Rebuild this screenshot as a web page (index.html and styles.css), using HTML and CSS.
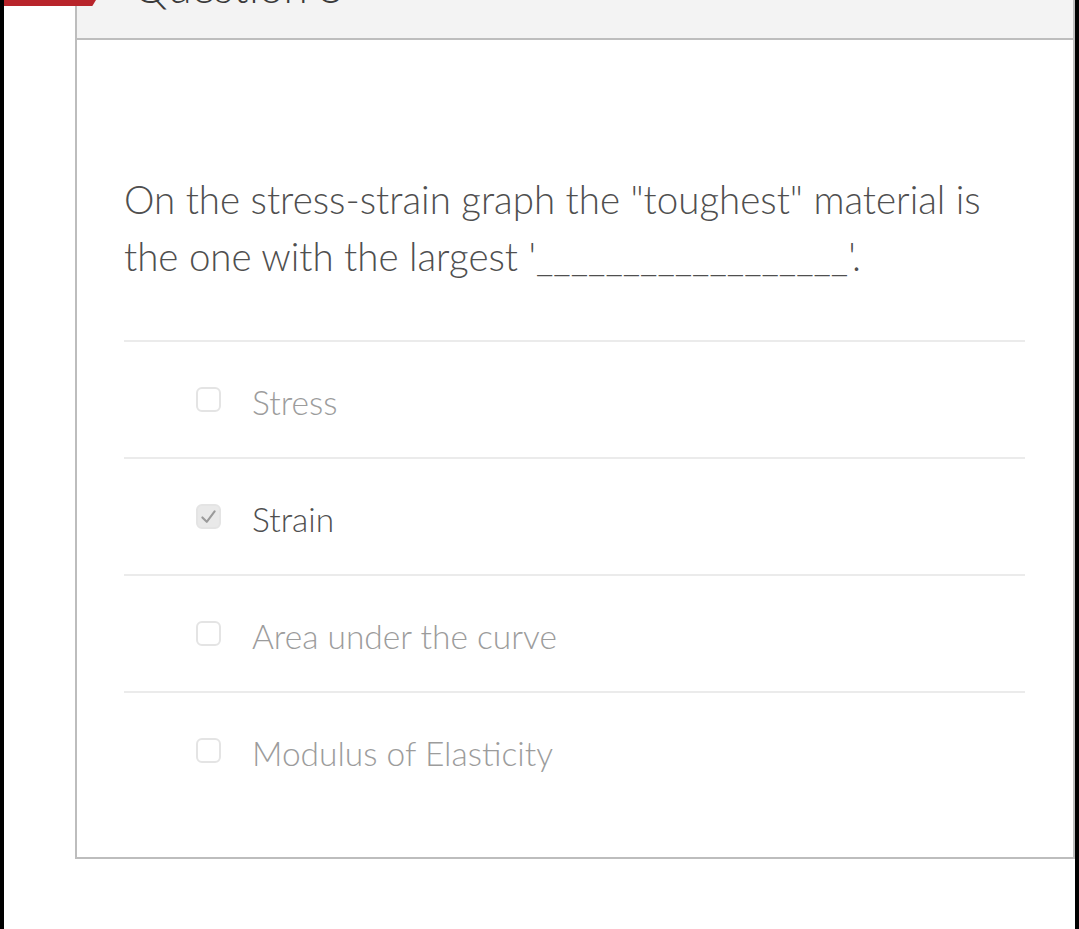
FILE: index.html
```html
<!DOCTYPE html>
<html lang="en">
<head>
<meta charset="utf-8">
<title>Question 5</title>
<link rel="stylesheet" href="styles.css">
</head>
<body>
<div class="screen">
  <div class="flag"></div>
  <div class="card">
    <div class="card-header">
      <h2 class="title">Question 5</h2>
    </div>
    <div class="card-body">
      <p class="question">On the stress-strain graph the "toughest" material is the one with the largest '__________________'.</p>
      <ul class="options">
        <li class="option">
          <span class="box"></span>
          <span class="label">Stress</span>
        </li>
        <li class="option is-checked">
          <span class="box">
            <svg viewBox="0 0 24 24" width="24" height="24" aria-hidden="true"><path d="M5 12.5 L10 17.5 L19 5.5" fill="none" stroke="#9a9a9a" stroke-width="2.4" stroke-linecap="round" stroke-linejoin="round"/></svg>
          </span>
          <span class="label">Strain</span>
        </li>
        <li class="option">
          <span class="box"></span>
          <span class="label">Area under the curve</span>
        </li>
        <li class="option">
          <span class="box"></span>
          <span class="label">Modulus of Elasticity</span>
        </li>
      </ul>
    </div>
  </div>
</div>
</body>
</html>
```

FILE: styles.css
```css
html, body {
  margin: 0;
  padding: 0;
  background: #fff;
  overflow: hidden;
}

.screen {
  position: relative;
  width: 1079px;
  height: 929px;
  box-sizing: border-box;
  border-left: 4px solid #000;
  border-right: 4px solid #000;
  background: #fff;
  font-family: Lato, "Open Sans", "Liberation Sans", sans-serif;
  font-weight: 300;
  overflow: hidden;
}

.flag {
  position: absolute;
  left: 0;
  top: 0;
  width: 92px;
  height: 6px;
  background: #b8252b;
  clip-path: polygon(0 0, 100% 0, 96% 100%, 0 100%);
}

.card {
  margin-left: 71px;
  margin-top: -40px;
  width: 1000px;
  box-sizing: border-box;
  border: 2px solid #bdbdbd;
  background: #fff;
}

.card-header {
  height: 78px;
  background: #f3f3f3;
  border-bottom: 2px solid #bdbdbd;
  box-sizing: border-box;
  padding-left: 56px;
}

.title {
  margin: 0;
  font-weight: 300;
  font-size: 44px;
  line-height: 44px;
  padding-top: 2px;
  color: #3a3a3a;
}

.card-body {
  padding: 131px 48px 49px 47px;
}

.question {
  margin: 0 0 55px 0;
  font-size: 38.5px;
  line-height: 57px;
  color: #4f4f4f;
}

.options {
  list-style: none;
  margin: 0;
  padding: 0;
}

.option {
  display: flex;
  align-items: center;
  gap: 31px;
  height: 117px;
  box-sizing: border-box;
  padding-left: 72px;
  border-top: 2px solid #ebebeb;
}

.box {
  width: 25px;
  height: 25px;
  box-sizing: border-box;
  border: 2px solid #e4e4e4;
  border-radius: 6px;
  background: #fff;
  flex: none;
  display: flex;
  align-items: center;
  justify-content: center;
}

.box svg {
  display: block;
}

.is-checked .box {
  background: #e9e9e9;
  border-color: #e4e4e4;
}

.label {
  font-size: 33.5px;
  line-height: 40px;
  color: #9c9c9c;
  position: relative;
  top: 2px;
}

.is-checked .label {
  color: #4f4f4f;
}
```
